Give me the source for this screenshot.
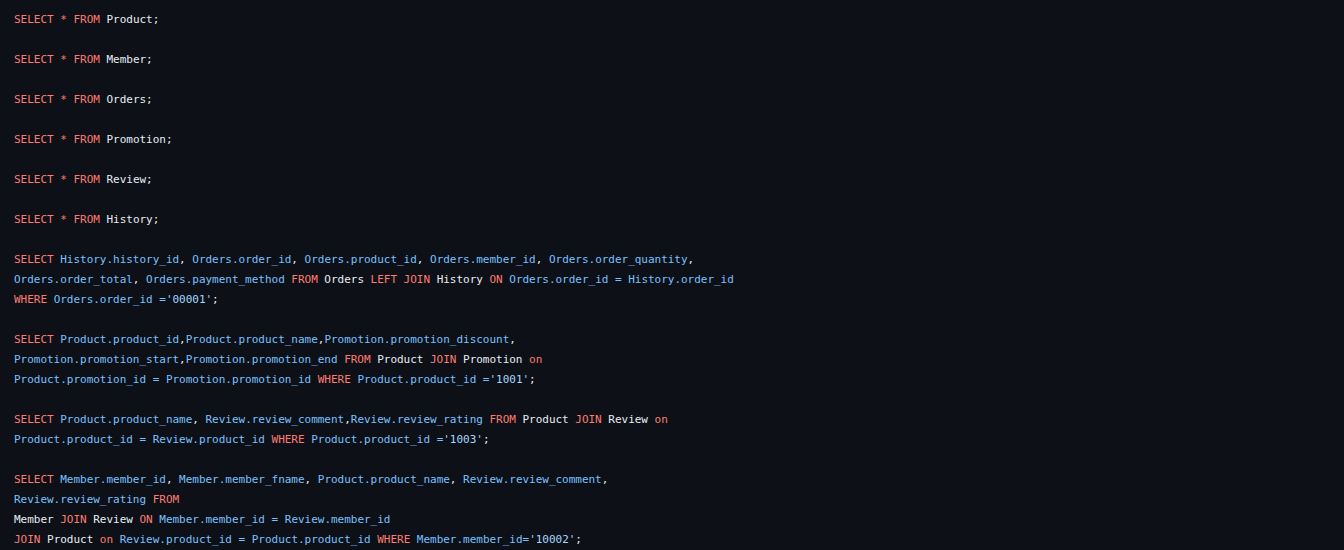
import React from "react";

type Tok = [string, string];

const K = (t: string): Tok => ["k", t];
const I = (t: string): Tok => ["i", t];
const T = (t: string): Tok => ["t", t];
const S = (t: string): Tok => ["s", t];

const colors: Record<string, string> = {
  k: "text-[#ff7b72]",
  i: "text-[#79c0ff]",
  t: "text-[#e6edf3]",
  s: "text-[#a5d6ff]",
};

const lines: Tok[][] = [
  [K("SELECT"), T(" "), K("*"), T(" "), K("FROM"), T(" Product;")],
  [],
  [K("SELECT"), T(" "), K("*"), T(" "), K("FROM"), T(" Member;")],
  [],
  [K("SELECT"), T(" "), K("*"), T(" "), K("FROM"), T(" Orders;")],
  [],
  [K("SELECT"), T(" "), K("*"), T(" "), K("FROM"), T(" Promotion;")],
  [],
  [K("SELECT"), T(" "), K("*"), T(" "), K("FROM"), T(" Review;")],
  [],
  [K("SELECT"), T(" "), K("*"), T(" "), K("FROM"), T(" History;")],
  [],
  [
    K("SELECT"), T(" "), I("History.history_id"), T(", "), I("Orders.order_id"), T(", "),
    I("Orders.product_id"), T(", "), I("Orders.member_id"), T(", "), I("Orders.order_quantity"), T(","),
  ],
  [
    I("Orders.order_total"), T(", "), I("Orders.payment_method"), T(" "), K("FROM"), T(" Orders "),
    K("LEFT JOIN"), T(" History "), K("ON"), T(" "), I("Orders.order_id"), T(" "), I("="), T(" "),
    I("History.order_id"),
  ],
  [K("WHERE"), T(" "), I("Orders.order_id"), T(" "), I("="), S("'00001'"), T(";")],
  [],
  [
    K("SELECT"), T(" "), I("Product.product_id"), T(","), I("Product.product_name"), T(","),
    I("Promotion.promotion_discount"), T(","),
  ],
  [
    I("Promotion.promotion_start"), T(","), I("Promotion.promotion_end"), T(" "), K("FROM"),
    T(" Product "), K("JOIN"), T(" Promotion "), K("on"),
  ],
  [
    I("Product.promotion_id"), T(" "), I("="), T(" "), I("Promotion.promotion_id"), T(" "), K("WHERE"),
    T(" "), I("Product.product_id"), T(" "), I("="), S("'1001'"), T(";"),
  ],
  [],
  [
    K("SELECT"), T(" "), I("Product.product_name"), T(", "), I("Review.review_comment"), T(","),
    I("Review.review_rating"), T(" "), K("FROM"), T(" Product "), K("JOIN"), T(" Review "), K("on"),
  ],
  [
    I("Product.product_id"), T(" "), I("="), T(" "), I("Review.product_id"), T(" "), K("WHERE"), T(" "),
    I("Product.product_id"), T(" "), I("="), S("'1003'"), T(";"),
  ],
  [],
  [
    K("SELECT"), T(" "), I("Member.member_id"), T(", "), I("Member.member_fname"), T(", "),
    I("Product.product_name"), T(", "), I("Review.review_comment"), T(","),
  ],
  [I("Review.review_rating"), T(" "), K("FROM")],
  [
    T("Member "), K("JOIN"), T(" Review "), K("ON"), T(" "), I("Member.member_id"), T(" "), I("="), T(" "),
    I("Review.member_id"),
  ],
  [
    K("JOIN"), T(" Product "), K("on"), T(" "), I("Review.product_id"), T(" "), I("="), T(" "),
    I("Product.product_id"), T(" "), K("WHERE"), T(" "), I("Member.member_id"), I("="), S("'10002'"), T(";"),
  ],
];

export default function App() {
  return (
    <div className="min-h-[550px] w-full bg-[#0d1117]">
      <pre className="px-[14px] pt-[10px] font-['DejaVu_Sans_Mono','Liberation_Mono',monospace] text-[11px] leading-[20px] tracking-[-0.02px] text-[#e6edf3]">
        {lines.map((line, i) => (
          <div key={i} className="h-[20px] whitespace-pre">
            {line.map(([kind, text], j) => (
              <span key={j} className={colors[kind]}>
                {text}
              </span>
            ))}
          </div>
        ))}
      </pre>
    </div>
  );
}
